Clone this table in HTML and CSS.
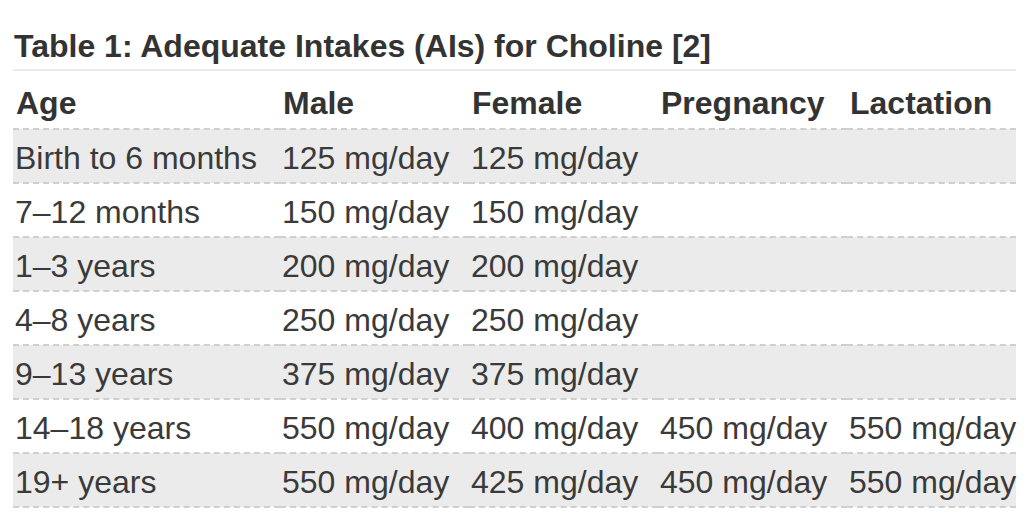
FILE: index.html
```html
<!DOCTYPE html>
<html lang="en">
<head>
<meta charset="utf-8">
<title>Adequate Intakes for Choline</title>
<link rel="stylesheet" href="styles.css">
</head>
<body>
<div class="wrap">
  <h2 class="caption">Table 1: Adequate Intakes (AIs) for Choline [2]</h2>
  <table class="ai">
    <colgroup>
      <col class="c-age"><col class="c-val"><col class="c-val"><col class="c-val"><col class="c-last">
    </colgroup>
    <thead>
      <tr><th>Age</th><th>Male</th><th>Female</th><th>Pregnancy</th><th>Lactation</th></tr>
    </thead>
    <tbody>
      <tr class="odd"><td>Birth to 6 months</td><td>125 mg/day</td><td>125 mg/day</td><td></td><td></td></tr>
      <tr><td>7–12 months</td><td>150 mg/day</td><td>150 mg/day</td><td></td><td></td></tr>
      <tr class="odd"><td>1–3 years</td><td>200 mg/day</td><td>200 mg/day</td><td></td><td></td></tr>
      <tr><td>4–8 years</td><td>250 mg/day</td><td>250 mg/day</td><td></td><td></td></tr>
      <tr class="odd"><td>9–13 years</td><td>375 mg/day</td><td>375 mg/day</td><td></td><td></td></tr>
      <tr><td>14–18 years</td><td>550 mg/day</td><td>400 mg/day</td><td>450 mg/day</td><td>550 mg/day</td></tr>
      <tr class="odd"><td>19+ years</td><td>550 mg/day</td><td>425 mg/day</td><td>450 mg/day</td><td>550 mg/day</td></tr>
    </tbody>
  </table>
</div>
</body>
</html>
```

FILE: styles.css
```css
html, body {
  margin: 0;
  padding: 0;
  background: #ffffff;
}

.wrap {
  width: 1003px;
  margin-left: 13px;
  padding-top: 28px;
  font-family: "Liberation Sans", Arial, Helvetica, sans-serif;
  color: #3a3a3a;
}

.caption {
  margin: 0;
  font-size: 32px;
  line-height: 36px;
  font-weight: bold;
  color: #333333;
  padding: 0 0 5px 1px;
  border-bottom: 2px solid #ebebeb;
}

.ai {
  width: 1003px;
  border-collapse: collapse;
  table-layout: fixed;
  font-size: 32px;
  line-height: 36px;
}

.c-age { width: 267px; }
.c-val { width: 189px; }
.c-last { width: 169px; }

.ai th,
.ai td {
  text-align: left;
  white-space: nowrap;
  padding: 10px 0 6px 2px;
  border-bottom: 2px dashed #cfcfcf;
}

.ai th {
  font-weight: bold;
  color: #333333;
  padding: 14px 0 7px 3px;
}

.ai tr.odd td {
  background: #ebebeb;
}
```
